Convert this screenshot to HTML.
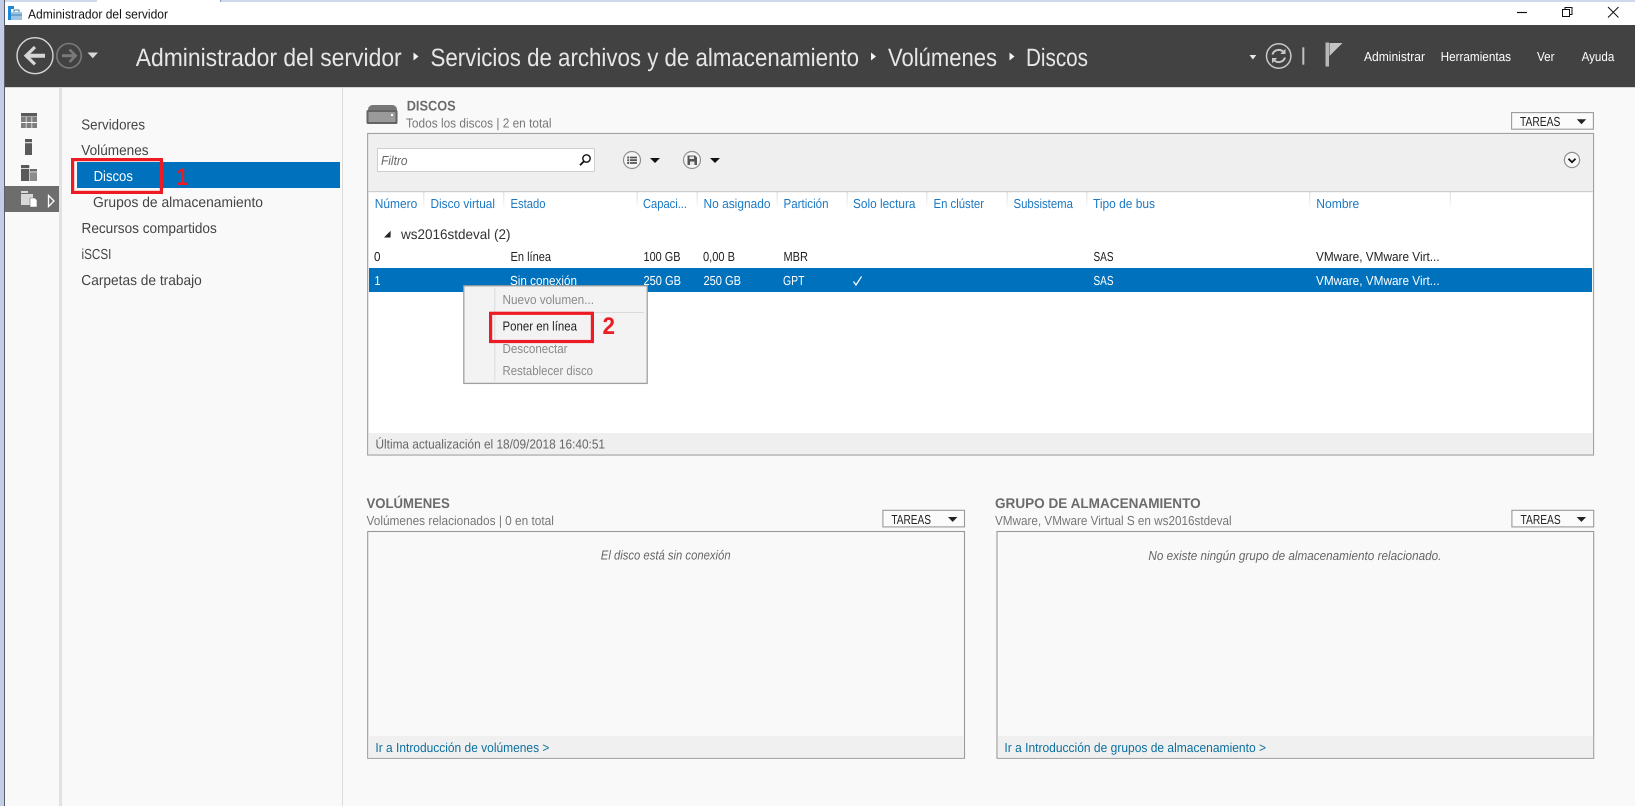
<!DOCTYPE html>
<html lang="es">
<head>
<meta charset="utf-8">
<title>Administrador del servidor</title>
<style>
html,body{margin:0;padding:0;width:1635px;height:806px;overflow:hidden;background:#f9f9f9}
svg{display:block}
text{font-family:"Liberation Sans",sans-serif;white-space:pre}
.h{font-size:25px;fill:#e6e6e6}
.m{font-size:13px;fill:#fff}
.n{font-size:14.5px;fill:#444}
.t{font-size:13px;fill:#222}
.c{font-size:13px;fill:#1a78c2}
.w{font-size:13px;fill:#fff}
.s{font-size:13px;fill:#777}
.b{font-size:14px;font-weight:bold;fill:#6b6b6b}
.i{font-size:13px;font-style:italic;fill:#666}
.l{font-size:13px;fill:#0b6f9e}
.d{font-size:13px;fill:#8a8a8a}
.r{font-size:24px;font-weight:bold;fill:#ed1c24}
.k{font-size:13px;fill:#222}
</style>
</head>
<body>
<svg width="1635" height="806" viewBox="0 0 1635 806" xmlns="http://www.w3.org/2000/svg" text-rendering="geometricPrecision">
<defs>
<linearGradient id="sep" x1="0" y1="0" x2="0" y2="1"><stop offset="0" stop-color="#d6d6d6"/><stop offset="1" stop-color="#ffffff"/></linearGradient>
</defs>
<rect width="1635" height="806" fill="#f9f9f9"/>

<!-- window chrome -->
<rect x="0" y="0" width="1635" height="25" fill="#fff"/>
<rect x="0" y="0" width="1635" height="2" fill="#d0d9ec"/>
<rect x="97" y="0" width="123" height="2" fill="#fff"/>
<rect x="220" y="0" width="1" height="2" fill="#8a96b0"/>
<rect x="0" y="0" width="4" height="806" fill="#c3cde4"/>
<rect x="4" y="0" width="1" height="806" fill="#5a6070"/>
<g>
<rect x="8" y="6" width="6" height="3" fill="#1e88d8"/>
<rect x="8" y="9" width="3" height="11" fill="#1e88d8"/>
<path d="M11 12h11v8H11z" fill="#9cc4e4"/>
<path d="M14 12v-2h5v2M11 15h11" stroke="#3f7fae" fill="none"/>
</g>
<text class="k" x="28" y="18.5" textLength="140" lengthAdjust="spacingAndGlyphs" style="fill:#111">Administrador del servidor</text>
<path d="M1517 12.5h10" stroke="#111" stroke-width="1.2"/>
<path d="M1562.5 9.5h7v7h-7zM1565 9.5V7.5h7v7h-2.5" fill="none" stroke="#111" stroke-width="1"/>
<path d="M1608 7l10.5 10.5M1618.5 7L1608 17.5" stroke="#111" stroke-width="1"/>

<!-- dark header -->
<rect x="5" y="25" width="1630" height="62" fill="#424242"/>
<rect x="5" y="87" width="1630" height="1" fill="#d4d4d4"/>
<circle cx="35" cy="55.7" r="18" fill="none" stroke="#d6d6d6" stroke-width="1.4"/>
<path d="M27 55.7h18" stroke="#d6d6d6" stroke-width="4"/>
<path d="M35 47l-9 8.7 9 8.7" fill="none" stroke="#d6d6d6" stroke-width="3.2"/>
<circle cx="69" cy="55.7" r="12.2" fill="none" stroke="#7a7a7a" stroke-width="1.6"/>
<path d="M62 55.7h13" stroke="#7a7a7a" stroke-width="3"/>
<path d="M69.5 49.5l6.2 6.2-6.2 6.2" fill="none" stroke="#7a7a7a" stroke-width="2.6"/>
<path d="M87.5 52.5h10.5l-5.2 5.8z" fill="#d8d8d8"/>

<text class="h" x="135.7" y="66" textLength="266" lengthAdjust="spacingAndGlyphs">Administrador del servidor</text>
<path d="M413.5 52.5l5 4-5 4z" fill="#f4f4f4"/>
<text class="h" x="430.5" y="66" textLength="428.5" lengthAdjust="spacingAndGlyphs">Servicios de archivos y de almacenamiento</text>
<path d="M871 52.5l5 4-5 4z" fill="#f4f4f4"/>
<text class="h" x="888" y="66" textLength="109" lengthAdjust="spacingAndGlyphs">Volúmenes</text>
<path d="M1009.5 52.5l5 4-5 4z" fill="#f4f4f4"/>
<text class="h" x="1026" y="66" textLength="62" lengthAdjust="spacingAndGlyphs">Discos</text>

<path d="M1249.5 55h6.8l-3.4 4.5z" fill="#e8e8e8"/>
<circle cx="1278.7" cy="56" r="12.2" fill="none" stroke="#c8c8c8" stroke-width="1.5"/>
<path d="M1272.5 54.5a6.5 6.5 0 0 1 11-2.5M1285 57.5a6.5 6.5 0 0 1-11 2.5" fill="none" stroke="#c8c8c8" stroke-width="2"/>
<path d="M1285.5 48.8v5.2h-5.2zM1272 63.2V58h5.2z" fill="#c8c8c8"/>
<rect x="1302.3" y="47.3" width="2" height="17.4" fill="#c0c0c0"/>
<rect x="1325.5" y="42.5" width="3.5" height="24" fill="#b8b8b8"/>
<path d="M1329.5 43h13l-13 13z" fill="#c4c4c4"/>
<text class="m" x="1364" y="61" textLength="61" lengthAdjust="spacingAndGlyphs">Administrar</text>
<text class="m" x="1440.6" y="61" textLength="70.4" lengthAdjust="spacingAndGlyphs">Herramientas</text>
<text class="m" x="1537" y="61" textLength="17.5" lengthAdjust="spacingAndGlyphs">Ver</text>
<text class="m" x="1581.6" y="61" textLength="32.7" lengthAdjust="spacingAndGlyphs">Ayuda</text>

<!-- left rail -->
<rect x="59" y="88" width="3" height="718" fill="#e2e2e2"/>
<rect x="342" y="88" width="1" height="718" fill="#dcdcdc"/>
<rect x="5" y="186" width="54" height="26" fill="#6d6d6d"/>
<rect x="21" y="113" width="16" height="3.5" fill="#5a5a5a"/>
<g fill="#7e7e7e">
<rect x="21" y="117" width="4.8" height="5"/><rect x="26.5" y="117" width="5" height="5"/><rect x="32.2" y="117" width="4.8" height="5"/>
<rect x="21" y="123" width="4.8" height="5"/><rect x="26.5" y="123" width="5" height="5"/><rect x="32.2" y="123" width="4.8" height="5"/>
</g>
<rect x="25" y="139" width="7" height="3.2" fill="#5a5a5a"/>
<rect x="25" y="143.2" width="7" height="11.8" fill="#5a5a5a"/>
<rect x="21" y="165" width="8.3" height="3.2" fill="#5a5a5a"/>
<rect x="21" y="169" width="8.3" height="12" fill="#5a5a5a"/>
<rect x="30" y="169" width="7" height="2.5" fill="#6a6a6a"/>
<rect x="30" y="172.3" width="7" height="8.7" fill="#8c8c8c"/>
<rect x="21" y="191" width="7" height="2" fill="#d8d8d8"/>
<rect x="21" y="194" width="12" height="11" fill="#d8d8d8"/>
<path d="M30 198h5l2 2v7h-7z" fill="#fff" stroke="#6d6d6d" stroke-width=".6"/>
<path d="M48.5 195.5l5.5 5.5-5.5 5.5z" fill="none" stroke="#fff" stroke-width="1.3"/>

<!-- nav -->
<rect x="77" y="162" width="263" height="26" fill="#0071bc"/>
<text class="n" x="81.3" y="129.3" textLength="63.7" lengthAdjust="spacingAndGlyphs">Servidores</text>
<text class="n" x="81.3" y="155" textLength="67.3" lengthAdjust="spacingAndGlyphs">Volúmenes</text>
<text class="n" x="93.6" y="181" textLength="39.3" lengthAdjust="spacingAndGlyphs" style="fill:#fff">Discos</text>
<text class="n" x="93" y="207" textLength="170" lengthAdjust="spacingAndGlyphs">Grupos de almacenamiento</text>
<text class="n" x="81.5" y="233" textLength="135.3" lengthAdjust="spacingAndGlyphs">Recursos compartidos</text>
<text class="n" x="81.5" y="259" textLength="29.9" lengthAdjust="spacingAndGlyphs">iSCSI</text>
<text class="n" x="81.3" y="285" textLength="120.5" lengthAdjust="spacingAndGlyphs">Carpetas de trabajo</text>
<rect x="72.6" y="159.6" width="88.8" height="32.8" fill="none" stroke="#ed1c24" stroke-width="3.2"/>
<text class="r" x="176.5" y="185" textLength="11.5" lengthAdjust="spacingAndGlyphs">1</text>

<!-- DISCOS panel -->
<g>
<path d="M368 110q0-4 4-5h21q4 1 4 5v2H368z" fill="#777"/>
<rect x="366.5" y="110" width="31" height="14" rx="1.5" fill="#646464"/>
<rect x="368.5" y="112" width="27" height="10" fill="#9a9a9a"/>
<rect x="391" y="114" width="2" height="2" fill="#fff"/>
</g>
<text class="b" x="406.7" y="110.4" textLength="49" lengthAdjust="spacingAndGlyphs">DISCOS</text>
<text class="s" x="406" y="127.3" textLength="145.5" lengthAdjust="spacingAndGlyphs">Todos los discos | 2 en total</text>

<rect x="1511.6" y="112.6" width="81.8" height="16.6" fill="#fbfbfb" stroke="#9a9a9a" stroke-width="1.1"/>
<text class="k" x="1520" y="125.8" textLength="40.4" lengthAdjust="spacingAndGlyphs">TAREAS</text>
<path d="M1576.8 119.3h9.4l-4.7 4.9z" fill="#222"/>

<rect x="367.7" y="133.5" width="1225.8" height="321.5" fill="#fff" stroke="#a2a2a2" stroke-width="1.2"/>
<rect x="368.3" y="134.1" width="1224.6" height="57" fill="#efefef"/>
<rect x="368.3" y="191" width="1224.6" height="1.2" fill="#cecece"/>
<rect x="368.3" y="433" width="1224.6" height="21.4" fill="#efefef"/>

<rect x="377.5" y="148.5" width="217" height="23" fill="#fff" stroke="#cfcfcf" stroke-width="1"/>
<text class="i" x="381" y="165" textLength="26.5" lengthAdjust="spacingAndGlyphs">Filtro</text>
<circle cx="586.5" cy="158.5" r="3.7" fill="none" stroke="#111" stroke-width="1.4"/>
<path d="M583.7 161.5l-3.7 3.7" stroke="#111" stroke-width="1.8"/>

<circle cx="632" cy="160" r="8.5" fill="#f7f7f7" stroke="#8f8f8f" stroke-width="1.2"/>
<path d="M627.2 156.5h2v2h-2zM627.2 159.2h2v2h-2zM627.2 162h2v2h-2z" fill="#555"/>
<path d="M630 157.5h7M630 160.2h7M630 163h7" stroke="#555" stroke-width="1.8"/>
<path d="M650 158h10l-5 5z" fill="#111"/>
<circle cx="692" cy="160" r="8.5" fill="#f7f7f7" stroke="#8f8f8f" stroke-width="1.2"/>
<path d="M687.5 155.5h7.5l2 2v7.5h-9.5z" fill="#555"/>
<rect x="689.5" y="156.5" width="4.5" height="2.5" fill="#e8e8e8"/>
<rect x="690" y="161.5" width="4.5" height="3.5" fill="#e8e8e8"/>
<path d="M710 158h10l-5 5z" fill="#111"/>
<circle cx="1572" cy="160" r="7.6" fill="#f7f7f7" stroke="#8f8f8f" stroke-width="1.2"/>
<path d="M1568.5 158.7l3.5 3.5 3.5-3.5" fill="none" stroke="#111" stroke-width="1.8"/>

<!-- column separators -->
<g fill="url(#sep)">
<rect x="423.3" y="192" width="1" height="18"/><rect x="503.3" y="192" width="1" height="18"/>
<rect x="636.7" y="192" width="1" height="18"/><rect x="696.7" y="192" width="1" height="18"/>
<rect x="776.7" y="192" width="1" height="18"/><rect x="846.7" y="192" width="1" height="18"/>
<rect x="926.3" y="192" width="1" height="18"/><rect x="1006.7" y="192" width="1" height="18"/>
<rect x="1086.3" y="192" width="1" height="18"/><rect x="1309.3" y="192" width="1" height="18"/>
<rect x="1449.8" y="192" width="1" height="18"/>
</g>

<text class="c" x="374.7" y="208" textLength="42.6" lengthAdjust="spacingAndGlyphs">Número</text>
<text class="c" x="430.5" y="208" textLength="64.5" lengthAdjust="spacingAndGlyphs">Disco virtual</text>
<text class="c" x="510.5" y="208" textLength="35" lengthAdjust="spacingAndGlyphs">Estado</text>
<text class="c" x="643" y="208" textLength="44" lengthAdjust="spacingAndGlyphs">Capaci...</text>
<text class="c" x="703.5" y="208" textLength="67" lengthAdjust="spacingAndGlyphs">No asignado</text>
<text class="c" x="783.5" y="208" textLength="45" lengthAdjust="spacingAndGlyphs">Partición</text>
<text class="c" x="853" y="208" textLength="62.5" lengthAdjust="spacingAndGlyphs">Solo lectura</text>
<text class="c" x="933.5" y="208" textLength="50.5" lengthAdjust="spacingAndGlyphs">En clúster</text>
<text class="c" x="1013.5" y="208" textLength="59.5" lengthAdjust="spacingAndGlyphs">Subsistema</text>
<text class="c" x="1093" y="208" textLength="62" lengthAdjust="spacingAndGlyphs">Tipo de bus</text>
<text class="c" x="1316.3" y="208" textLength="43" lengthAdjust="spacingAndGlyphs">Nombre</text>

<path d="M384 237.5h6.6v-6.8z" fill="#222"/>
<text x="401" y="239" textLength="109.5" lengthAdjust="spacingAndGlyphs" style="font-size:14px;fill:#333">ws2016stdeval (2)</text>

<text class="t" x="374" y="261" textLength="6.5" lengthAdjust="spacingAndGlyphs">0</text>
<text class="t" x="510.5" y="261" textLength="40.5" lengthAdjust="spacingAndGlyphs">En línea</text>
<text class="t" x="643.5" y="261" textLength="37" lengthAdjust="spacingAndGlyphs">100 GB</text>
<text class="t" x="703" y="261" textLength="32" lengthAdjust="spacingAndGlyphs">0,00 B</text>
<text class="t" x="783.5" y="261" textLength="24.5" lengthAdjust="spacingAndGlyphs">MBR</text>
<text class="t" x="1093.5" y="261" textLength="20" lengthAdjust="spacingAndGlyphs">SAS</text>
<text class="t" x="1316" y="261" textLength="123.6" lengthAdjust="spacingAndGlyphs">VMware, VMware Virt...</text>

<rect x="369" y="268" width="1223" height="24" fill="#0071bc"/>
<text class="w" x="374.5" y="285" textLength="6" lengthAdjust="spacingAndGlyphs">1</text>
<text class="w" x="510" y="285" textLength="67" lengthAdjust="spacingAndGlyphs">Sin conexión</text>
<text class="w" x="643.5" y="285" textLength="37.5" lengthAdjust="spacingAndGlyphs">250 GB</text>
<text class="w" x="703.5" y="285" textLength="37.5" lengthAdjust="spacingAndGlyphs">250 GB</text>
<text class="w" x="783" y="285" textLength="21.5" lengthAdjust="spacingAndGlyphs">GPT</text>
<path d="M853.5 281.5l2.5 3.5 5.5-8.5" fill="none" stroke="#fff" stroke-width="1.2"/>
<text class="w" x="1093.5" y="285" textLength="20" lengthAdjust="spacingAndGlyphs">SAS</text>
<text class="w" x="1316" y="285" textLength="123.6" lengthAdjust="spacingAndGlyphs">VMware, VMware Virt...</text>

<text class="s" x="375.5" y="448.7" textLength="229.5" lengthAdjust="spacingAndGlyphs" style="fill:#666">Última actualización el 18/09/2018 16:40:51</text>

<!-- context menu -->
<rect x="463.8" y="285.8" width="183.4" height="97.6" fill="#f3f3f3" stroke="#a0a0a0" stroke-width="1.3"/>
<rect x="494.3" y="288" width="1" height="93" fill="#dadada"/>
<rect x="495" y="312" width="149" height="1" fill="#dadada"/>
<text class="d" x="502.5" y="304" textLength="91.5" lengthAdjust="spacingAndGlyphs">Nuevo volumen...</text>
<text class="k" x="502.5" y="330.7" textLength="74.5" lengthAdjust="spacingAndGlyphs">Poner en línea</text>
<text class="d" x="502.5" y="353" textLength="65" lengthAdjust="spacingAndGlyphs">Desconectar</text>
<text class="d" x="502.5" y="375" textLength="90.5" lengthAdjust="spacingAndGlyphs">Restablecer disco</text>
<rect x="490.6" y="313.3" width="101.8" height="28.2" fill="none" stroke="#ed1c24" stroke-width="3.2"/>
<text class="r" x="602.5" y="334" textLength="12.5" lengthAdjust="spacingAndGlyphs">2</text>

<!-- VOLÚMENES -->
<text class="b" x="366.5" y="508" textLength="83.3" lengthAdjust="spacingAndGlyphs">VOLÚMENES</text>
<text class="s" x="366.5" y="525" textLength="187.4" lengthAdjust="spacingAndGlyphs">Volúmenes relacionados | 0 en total</text>
<rect x="882.9" y="510.3" width="81.6" height="16.6" fill="#fbfbfb" stroke="#9a9a9a" stroke-width="1.1"/>
<text class="k" x="891.4" y="523.8" textLength="39.6" lengthAdjust="spacingAndGlyphs">TAREAS</text>
<path d="M948 517h9.4l-4.7 4.9z" fill="#222"/>
<rect x="367.7" y="531.5" width="596.8" height="226.8" fill="#f9f9f9" stroke="#9a9a9a" stroke-width="1.1"/>
<rect x="368.3" y="736" width="595.6" height="21.8" fill="#f0f0f0"/>
<text class="i" x="600.8" y="559.3" textLength="129.8" lengthAdjust="spacingAndGlyphs">El disco está sin conexión</text>
<text class="l" x="375.4" y="751.8" textLength="174" lengthAdjust="spacingAndGlyphs">Ir a Introducción de volúmenes &gt;</text>

<!-- GRUPO -->
<text class="b" x="995" y="508" textLength="205.7" lengthAdjust="spacingAndGlyphs">GRUPO DE ALMACENAMIENTO</text>
<text class="s" x="995" y="525" textLength="236.6" lengthAdjust="spacingAndGlyphs">VMware, VMware Virtual S en ws2016stdeval</text>
<rect x="1511.9" y="510.3" width="81.8" height="16.6" fill="#fbfbfb" stroke="#9a9a9a" stroke-width="1.1"/>
<text class="k" x="1520.5" y="523.8" textLength="40.2" lengthAdjust="spacingAndGlyphs">TAREAS</text>
<path d="M1576.7 517h9.4l-4.7 4.9z" fill="#222"/>
<rect x="997" y="531.5" width="596.7" height="226.8" fill="#f9f9f9" stroke="#9a9a9a" stroke-width="1.1"/>
<rect x="997.6" y="736" width="595.5" height="21.8" fill="#f0f0f0"/>
<text class="i" x="1148.4" y="560" textLength="293" lengthAdjust="spacingAndGlyphs">No existe ningún grupo de almacenamiento relacionado.</text>
<text class="l" x="1004.4" y="752" textLength="261.6" lengthAdjust="spacingAndGlyphs">Ir a Introducción de grupos de almacenamiento &gt;</text>
</svg>
</body>
</html>
